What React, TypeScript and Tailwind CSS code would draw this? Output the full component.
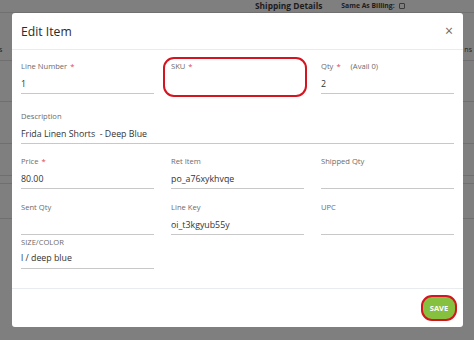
import React from "react";

const font = { fontFamily: '"Open Sans", "Noto Sans", sans-serif' };

function Field({
  label,
  req,
  extra,
  value,
  box = "h-[22px] pt-[4px]",
  line = true,
}: {
  label: string;
  req?: boolean;
  extra?: string;
  value?: string;
  box?: string;
  line?: boolean;
}) {
  return (
    <div className="flex flex-col">
      <div className="h-[12px] leading-[12px] text-[7.6px] text-[#6b6b6b] whitespace-nowrap">
        {label}
        {req && <span className="text-[#e0454f] ml-[3px]">*</span>}
        {extra && <span className="ml-[10px]">{extra}</span>}
      </div>
      <div
        className={`${box} ${line ? "border-b border-[#c8c8c8]" : ""} text-[8.8px] leading-[16px] text-[#333] whitespace-pre`}
      >
        {value}
      </div>
    </div>
  );
}

export default function App() {
  return (
    <div
      className="relative w-[474px] h-[340px] overflow-hidden bg-[#7f7f7f]"
      style={font}
    >
      {/* background page (dimmed) */}
      <div className="flex flex-col">
        <div className="h-[13px] border-b border-[#707070] flex items-center text-[#1c1c1c]">
          <span className="ml-[255px] text-[8.4px] font-bold leading-[12px]">Shipping Details</span>
          <span className="ml-[19px] text-[6.8px] font-bold leading-[12px]">Same As Billing:</span>
          <span className="ml-[4px] w-[6px] h-[6px] border border-[#3a3a3a] rounded-[1px]"></span>
        </div>
        <div className="h-[48px] border-b border-[#6f6f6f] flex items-center justify-between pt-[28px] text-[7px] text-[#1c1c1c]">
          <span className="-ml-[1px]">s</span>
          <span className="mr-[2px]">ns</span>
        </div>
        <div className="h-[41px] border-b border-[#6f6f6f]"></div>
        <div className="h-[42px] border-b border-[#6f6f6f]"></div>
        <div className="h-[32px] border-b border-[#6f6f6f]"></div>
        <div className="h-[8px] border-b border-[#6f6f6f]"></div>
        <div className="h-[35px] border-b border-[#6f6f6f]"></div>
      </div>

      {/* modal */}
      <div className="absolute top-[13px] left-[12px] w-[451px] h-[314px] bg-white rounded-[3px] flex flex-col">
        <div className="h-[37px] border-b border-[#e8ecef] flex items-center justify-between pl-[9px] pr-[10px]">
          <span className="text-[12.2px] text-[#2b2b2b] leading-[16px] pt-[1px]">Edit Item</span>
          <span className="text-[14px] text-[#6a6a6a] leading-[14px]">×</span>
        </div>

        <div className="flex-1 px-[9px] pt-[10px] flex flex-col">
          <div className="grid grid-cols-3 gap-x-[17px]">
            <Field label="Line Number" req value="1" />
            <div className="relative">
              <Field label="SKU" req value="" line={false} />
              <div className="absolute -left-[8px] -top-[3px] w-[144px] h-[40px] border-[2.5px] border-[#d4141f] rounded-[11px]"></div>
            </div>
            <Field label="Qty" req extra="(Avail 0)" value="2" />
          </div>

          <div className="mt-[16px]">
            <Field label="Description" value="Frida Linen Shorts  - Deep Blue" />
          </div>

          <div className="mt-[11px] grid grid-cols-3 gap-x-[17px]">
            <Field label="Price" req value="80.00" />
            <Field label="Ret Item" value="po_a76xykhvqe" />
            <Field label="Shipped Qty" value="" />
          </div>

          <div className="mt-[12px] grid grid-cols-3 gap-x-[17px]">
            <Field label="Sent Qty" value="" />
            <Field label="Line Key" value="oi_t3kgyub55y" />
            <Field label="UPC" value="" />
          </div>

          <div className="mt-[1px] grid grid-cols-3 gap-x-[17px]">
            <Field label="SIZE/COLOR" value="l / deep blue" box="h-[21px] pt-[2px]" />
          </div>
        </div>

        <div className="h-[39px] border-t border-[#e8ecef] flex items-center justify-end pr-[6px]">
          <div className="w-[36px] h-[26px] rounded-[11px] border-[2.5px] border-[#d4141f] bg-[#86c03f] flex items-center justify-center">
            <span className="text-[7.5px] font-bold text-white leading-[10px]">SAVE</span>
          </div>
        </div>
      </div>
    </div>
  );
}
